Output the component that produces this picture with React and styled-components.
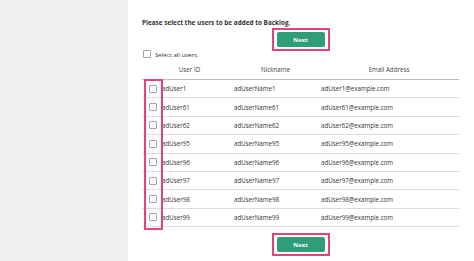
import React from 'react';
import styled, { createGlobalStyle } from 'styled-components';

const GlobalStyle = createGlobalStyle`
  html, body {
    margin: 0;
    padding: 0;
    background: #ffffff;
  }
  body {
    font-family: "Open Sans", "Liberation Sans", sans-serif;
    color: #333333;
  }
`;

const users = [
  { id: 'adUser1', name: 'adUserName1', mail: 'adUser1@example.com' },
  { id: 'adUser61', name: 'adUserName61', mail: 'adUser61@example.com' },
  { id: 'adUser62', name: 'adUserName62', mail: 'adUser62@example.com' },
  { id: 'adUser95', name: 'adUserName95', mail: 'adUser95@example.com' },
  { id: 'adUser96', name: 'adUserName96', mail: 'adUser96@example.com' },
  { id: 'adUser97', name: 'adUserName97', mail: 'adUser97@example.com' },
  { id: 'adUser98', name: 'adUserName98', mail: 'adUser98@example.com' },
  { id: 'adUser99', name: 'adUserName99', mail: 'adUser99@example.com' },
];

const Page = styled.div`
  display: flex;
  width: 474px;
  height: 261px;
  overflow: hidden;
`;

const Sidebar = styled.div`
  width: 127px;
  flex-shrink: 0;
  background: #f0f0f0;
  border-right: 1px solid #ececec;
`;

const Main = styled.div`
  flex: 1;
  padding: 18px 15px 0 14px;
  display: flex;
  flex-direction: column;
`;

const Title = styled.div`
  font-size: 6.4px;
  font-weight: 700;
  line-height: 10px;
  height: 10px;
  color: #333;
`;

const Highlight = styled.div`
  align-self: center;
  border: 2px solid #e3437c;
  padding: 2px 3px;
  margin-top: ${props => props.top || 0}px;
  display: flex;
`;

const NextButton = styled.button`
  width: 48px;
  height: 15px;
  border: 0;
  border-radius: 2px;
  background: #2f9c7a;
  color: #ffffff;
  font-family: "Open Sans", "Liberation Sans", sans-serif;
  font-size: 6px;
  font-weight: 700;
  padding: 0;
`;

const SelectAll = styled.label`
  display: flex;
  align-items: center;
  gap: 4px;
  height: 8px;
  margin-top: -1px;
  padding-left: 1px;
  font-size: 6.1px;
  color: #333;
`;

const CheckBox = styled.span`
  display: inline-block;
  width: 6px;
  height: 6px;
  border: 1px solid #a5a5a5;
  border-radius: 1px;
  background: #fff;
  flex-shrink: 0;
`;

const Table = styled.div`
  position: relative;
`;

const GridRow = styled.div`
  display: grid;
  grid-template-columns: 18px 72px 87px 1fr;
  align-items: center;
  box-sizing: border-box;
  font-size: 6.2px;
`;

const HeadRow = styled(GridRow)`
  height: 22px;
  padding-top: 2px;
  border-bottom: 1px solid #bdbdbd;
  color: #444;
`;

const HeadCell = styled.div`
  text-align: center;
  grid-column: ${props => props.span || 'auto'};
  padding-left: ${props => props.shift || 0}px;
`;

const UserRow = styled(GridRow)`
  height: 18.4px;
  border-bottom: 1px solid #dcdcdc;
`;

const CheckCell = styled.div`
  display: flex;
  justify-content: flex-end;
  padding-right: 3px;
`;

const Cell = styled.div`
  padding-left: 2px;
  white-space: nowrap;
  color: #333;
`;

const ColumnMark = styled.div`
  position: absolute;
  left: 2px;
  top: 21px;
  width: 15px;
  bottom: -3px;
  border: 2px solid #e3437c;
  pointer-events: none;
`;

export default function App() {
  return (
    <>
      <GlobalStyle />
      <Page>
        <Sidebar />
        <Main>
          <Title>Please select the users to be added to Backlog.</Title>
          <Highlight>
            <NextButton>Next</NextButton>
          </Highlight>
          <SelectAll>
            <CheckBox />
            Select all users.
          </SelectAll>
          <Table>
            <HeadRow>
              <HeadCell span="1 / 3" shift={5}>User ID</HeadCell>
              <HeadCell>Nickname</HeadCell>
              <HeadCell>Email Address</HeadCell>
            </HeadRow>
            {users.map(u => (
              <UserRow key={u.id}>
                <CheckCell><CheckBox /></CheckCell>
                <Cell>{u.id}</Cell>
                <Cell>{u.name}</Cell>
                <Cell>{u.mail}</Cell>
              </UserRow>
            ))}
            <ColumnMark />
          </Table>
          <Highlight top={6}>
            <NextButton>Next</NextButton>
          </Highlight>
        </Main>
      </Page>
    </>
  );
}
